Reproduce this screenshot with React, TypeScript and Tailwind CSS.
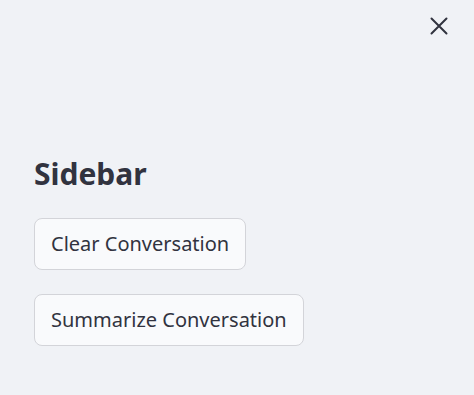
const buttons = ["Clear Conversation", "Summarize Conversation"];

export default function App() {
  return (
    <div
      className="w-[474px] h-[395px] bg-[#f0f2f6] flex flex-col px-[34px]"
      style={{ fontFamily: '"Source Sans Pro", "Noto Sans", sans-serif' }}
    >
      <div className="flex justify-end pt-[16px] -mr-[9px]">
        <button className="w-[20px] h-[20px] flex items-center justify-center text-[#31333f]">
          <svg viewBox="0 0 20 20" className="w-[20px] h-[20px]" fill="none" stroke="currentColor" strokeWidth={2} strokeLinecap="round">
            <path d="M2.5 2.5l15 15M17.5 2.5l-15 15" />
          </svg>
        </button>
      </div>
      <h2 className="mt-[118px] text-[30px] font-bold text-[#31333f] leading-[40px]">Sidebar</h2>
      <div className="flex flex-col items-start gap-[24px] mt-[24px]">
        {buttons.map((b) => (
          <button
            key={b}
            className="h-[52px] px-[16px] rounded-[8px] border border-[#d3d4d9] bg-[#f9fafc] text-[20px] text-[#31333f]"
          >
            {b}
          </button>
        ))}
      </div>
    </div>
  );
}
